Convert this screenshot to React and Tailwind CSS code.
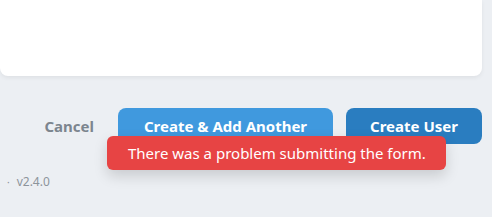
export default function App() {
  return (
    <div className="relative w-[492px] h-[217px] overflow-hidden bg-[#eceff3]" style={{ fontFamily: '"Noto Sans", Lato, sans-serif' }}>
      <div className="w-[482px] h-[76px] bg-white rounded-b-lg shadow-[0_2px_4px_rgba(0,0,0,0.06)]" />
      <div className="mt-[32px] flex items-center justify-end pr-[10px]">
        <button className="mr-[24px] text-[15px] font-bold text-[#7c858e]">Cancel</button>
        <button className="w-[215px] h-[36px] rounded-lg bg-[#4099de] text-white text-[15px] font-bold">Create &amp; Add Another</button>
        <button className="ml-[13px] w-[136px] h-[36px] rounded-lg bg-[#2a7dc0] text-white text-[15px] font-bold">Create User</button>
      </div>
      <div className="mt-[29px] flex items-center pl-[7px] text-[12px] text-[#8d949b]">
        <span className="text-[10px] mr-[7px]">·</span>
        <span>v2.4.0</span>
      </div>
      <div className="absolute left-[107px] top-[136px] w-[339px] h-[34px] rounded-md bg-[#e74444] text-white text-[15px] flex items-center pl-[21px] shadow-[0_6px_14px_rgba(0,0,0,0.15)]">
        There was a problem submitting the form.
      </div>
    </div>
  );
}
